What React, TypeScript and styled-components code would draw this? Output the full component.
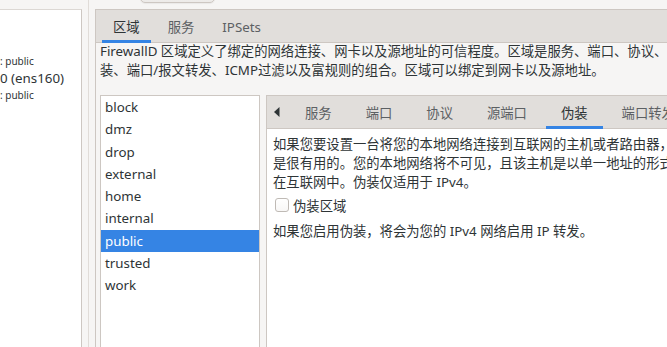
import React from 'react';
import styled, { createGlobalStyle } from 'styled-components';

const GlobalStyle = createGlobalStyle`
  html, body { margin: 0; padding: 0; background: #f6f5f4; overflow: hidden; }
  body {
    font-family: "Noto Sans", "Noto Sans CJK SC", sans-serif;
    font-size: 13.33px;
    color: #2e3436;
  }
`;

const Window = styled.div`
  width: 667px;
  height: 347px;
  display: flex;
  overflow: hidden;
  background: #f6f5f4;
`;

const SidePane = styled.div`
  width: 88px;
  flex: none;
  display: flex;
  flex-direction: column;
  padding-top: 9px;
  box-sizing: border-box;
`;

const SideList = styled.div`
  width: 82px;
  flex: 1;
  background: #ffffff;
  border-top: 1px solid #dcd8d4;
  border-right: 1px solid #cdc7c2;
  box-sizing: border-box;
  display: flex;
  flex-direction: column;
  overflow: hidden;
  white-space: nowrap;
`;

const SideTitle = styled.div`
  font-size: 13.33px;
  line-height: 18px;
  margin-top: 2px;
`;

const SideSub = styled.div<{ $first?: boolean }>`
  font-size: 10px;
  line-height: 12px;
  margin-top: ${(p) => (p.$first ? '45px' : '2px')};
`;

const Separator = styled.div`
  width: 1px;
  flex: none;
  background: #e0dcd8;
`;

const MainColumn = styled.div`
  flex: 1;
  display: flex;
  flex-direction: column;
  padding-left: 6px;
  min-width: 0;
`;

const TopBar = styled.div`
  height: 9px;
  flex: none;
  display: flex;
  overflow: visible;
`;

const TopButton = styled.div`
  width: 75px;
  height: 28px;
  margin-left: 45px;
  margin-top: -25px;
  box-sizing: border-box;
  border: 1px solid #cdc7c2;
  border-radius: 5px;
  background: linear-gradient(#f6f5f4, #edebe9);
  box-shadow: 0 1px 1px rgba(0, 0, 0, 0.05);
`;

const Notebook = styled.div`
  width: 640px;
  flex: 1;
  display: flex;
  flex-direction: column;
  border-left: 1px solid #cdc7c2;
  border-top: 1px solid #cdc7c2;
  box-sizing: border-box;
  background: #f6f5f4;
`;

const TabHeader = styled.div<{ $gap: number; $pad: number }>`
  height: 33px;
  flex: none;
  box-sizing: border-box;
  display: flex;
  align-items: stretch;
  gap: ${(p) => p.$gap}px;
  padding-left: ${(p) => p.$pad}px;
  background: #e1dedb;
  border-bottom: 1px solid #cdc7c2;
  white-space: nowrap;
`;

const Tab = styled.div<{ $active?: boolean; $pad: number }>`
  display: flex;
  align-items: center;
  padding: 0 ${(p) => p.$pad}px;
  margin-bottom: -1px;
  color: ${(p) => (p.$active ? '#2e3436' : '#5c6063')};
  box-shadow: ${(p) => (p.$active ? 'inset 0 -3px 0 #3584e4' : 'none')};
`;

const ArrowButton = styled.div`
  width: 19px;
  flex: none;
  display: flex;
  align-items: center;
  justify-content: center;
`;

const Page = styled.div`
  flex: 1;
  display: flex;
  flex-direction: column;
  padding: 0 0 0 4px;
  min-height: 0;
`;

const Description = styled.div`
  margin-top: -1px;
  line-height: 18.5px;
  white-space: nowrap;
`;

const ContentRow = styled.div`
  flex: 1;
  display: flex;
  gap: 6px;
  margin-top: 16px;
  min-height: 0;
`;

const ZoneList = styled.div`
  width: 160px;
  flex: none;
  box-sizing: border-box;
  background: #ffffff;
  border: 1px solid #cdc7c2;
  border-bottom: none;
  display: flex;
  flex-direction: column;
`;

const ZoneItem = styled.div<{ $selected?: boolean }>`
  height: 22.25px;
  line-height: 22.25px;
  padding-left: 4px;
  background: ${(p) => (p.$selected ? '#3584e4' : 'transparent')};
  color: ${(p) => (p.$selected ? '#ffffff' : '#2e3436')};
`;

const Pane = styled.div`
  flex: 1;
  display: flex;
  flex-direction: column;
  box-sizing: border-box;
  border-left: 1px solid #cdc7c2;
  border-top: 1px solid #cdc7c2;
  background: #ffffff;
  min-width: 0;
`;

const PaneBody = styled.div`
  padding: 6px 0 0 6px;
  white-space: nowrap;
  display: flex;
  flex-direction: column;
`;

const Para = styled.div`
  line-height: 19px;
`;

const CheckRow = styled.label`
  display: flex;
  align-items: center;
  gap: 4px;
  height: 18px;
  margin-top: 4px;
  padding-left: 2px;
`;

const CheckBox = styled.span`
  width: 14px;
  height: 14px;
  box-sizing: border-box;
  border: 1px solid #bfbab5;
  border-radius: 3px;
  background: linear-gradient(#ffffff, #f8f7f6);
`;

const Note = styled.div`
  line-height: 19px;
  margin-top: 8px;
`;

const zones = ['block', 'dmz', 'drop', 'external', 'home', 'internal', 'public', 'trusted', 'work'];
const paneTabs = ['服务', '端口', '协议', '源端口', '伪装', '端口转发', 'ICMP 过滤器'];

export default function App() {
  return (
    <>
      <GlobalStyle />
      <Window>
        <SidePane>
          <SideList>
            <SideSub $first>: public</SideSub>
            <SideTitle>0 (ens160)</SideTitle>
            <SideSub>: public</SideSub>
          </SideList>
        </SidePane>
        <Separator />
        <MainColumn>
          <TopBar>
            <TopButton />
          </TopBar>
          <Notebook>
            <TabHeader $gap={6} $pad={6}>
              <Tab $active $pad={11}>区域</Tab>
              <Tab $pad={11}>服务</Tab>
              <Tab $pad={11}>IPSets</Tab>
            </TabHeader>
            <Page>
              <Description>
                <div>FirewallD 区域定义了绑定的网络连接、网卡以及源地址的可信程度。区域是服务、端口、协议、伪</div>
                <div>装、端口/报文转发、ICMP过滤以及富规则的组合。区域可以绑定到网卡以及源地址。</div>
              </Description>
              <ContentRow>
                <ZoneList>
                  {zones.map((z) => (
                    <ZoneItem key={z} $selected={z === 'public'}>
                      {z}
                    </ZoneItem>
                  ))}
                </ZoneList>
                <Pane>
                  <TabHeader $gap={4} $pad={0}>
                    <ArrowButton>
                      <svg width="6" height="10" viewBox="0 0 6 10">
                        <path d="M5.5 0 L0 5 L5.5 10 Z" fill="#2e3436" />
                      </svg>
                    </ArrowButton>
                    {paneTabs.map((t) => (
                      <Tab key={t} $pad={15} $active={t === '伪装'}>
                        {t}
                      </Tab>
                    ))}
                  </TabHeader>
                  <PaneBody>
                    <Para>如果您要设置一台将您的本地网络连接到互联网的主机或者路由器，这</Para>
                    <Para>是很有用的。您的本地网络将不可见，且该主机是以单一地址的形式出现</Para>
                    <Para>在互联网中。伪装仅适用于 IPv4。</Para>
                    <CheckRow>
                      <CheckBox />
                      <span>伪装区域</span>
                    </CheckRow>
                    <Note>如果您启用伪装，将会为您的 IPv4 网络启用 IP 转发。</Note>
                  </PaneBody>
                </Pane>
              </ContentRow>
            </Page>
          </Notebook>
        </MainColumn>
      </Window>
    </>
  );
}
